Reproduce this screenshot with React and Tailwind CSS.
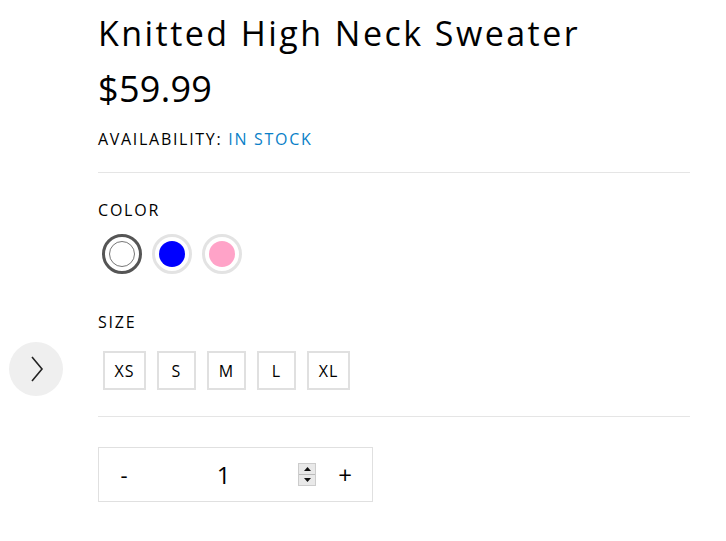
const colors = [
  { name: "white", fill: "bg-white", active: true },
  { name: "blue", fill: "bg-[#0000ff]" },
  { name: "pink", fill: "bg-[#ffa3c8]" },
];

const sizes = ["XS", "S", "M", "L", "XL"];

export default function App() {
  return (
    <div className="relative w-[726px] h-[541px] bg-white text-black font-['Open_Sans',sans-serif] overflow-hidden">
      <button className="absolute left-[9px] top-[342px] w-[54px] h-[54px] rounded-full bg-[#efefef] flex items-center justify-center">
        <svg width="14" height="28" viewBox="0 0 14 28" className="ml-[2px]">
          <path d="M2 2 L12 14 L2 26" fill="none" stroke="#222" strokeWidth="1.6" />
        </svg>
      </button>

      <div className="ml-[98px] w-[592px] pt-[11px]">
        <h1 className="text-[34px] leading-[44px] tracking-[2.45px]">Knitted High Neck Sweater</h1>
        <div className="mt-[12px] text-[36px] leading-[44px] tracking-[0.3px]">$59.99</div>
        <div className="mt-[16px] text-[16px] leading-[24px] tracking-[1.7px]">
          AVAILABILITY: <span className="text-[#0a7fc8]">IN STOCK</span>
        </div>

        <div className="mt-[21px] border-t border-[#e5e5e5]" />

        <div className="mt-[26px] text-[16px] leading-[22px] tracking-[1.8px]">COLOR</div>
        <div className="mt-[13px] flex gap-[10px] pl-[4px]">
          {colors.map((c) => (
            <div
              key={c.name}
              className={`w-[40px] h-[40px] rounded-full p-[4px] border-[3px] ${
                c.active ? "border-[#555]" : "border-[#e3e3e3]"
              }`}
            >
              <div className={`w-full h-full rounded-full ${c.fill} ${c.active ? "border border-[#777]" : ""}`} />
            </div>
          ))}
        </div>

        <div className="mt-[37px] text-[16px] leading-[22px] tracking-[1.8px]">SIZE</div>
        <div className="mt-[18px] flex gap-[11px] pl-[5px]">
          {sizes.map((s) => (
            <div
              key={s}
              className={`h-[39px] ${s.length > 1 ? "w-[43px]" : "w-[39px]"} border-2 border-[#e0e0e0] flex items-center justify-center text-[16px] font-medium tracking-[1px]`}
            >
              {s}
            </div>
          ))}
        </div>

        <div className="mt-[26px] border-t border-[#e5e5e5]" />

        <div className="mt-[30px] w-[275px] h-[55px] border border-[#e0e0e0] flex items-center">
          <span className="w-[50px] text-center text-[22px]">-</span>
          <span className="flex-1 text-center text-[24px]">1</span>
          <div className="w-[18px] h-[23px] border border-[#ccc] bg-[#e9e9e9] flex flex-col mr-[20px]">
            <div className="flex-1 flex items-center justify-center border-b border-[#bbb]">
              <svg width="7" height="4" viewBox="0 0 7 4"><path d="M0 4 L3.5 0 L7 4 Z" fill="#111" /></svg>
            </div>
            <div className="flex-1 flex items-center justify-center">
              <svg width="7" height="4" viewBox="0 0 7 4"><path d="M0 0 L3.5 4 L7 0 Z" fill="#111" /></svg>
            </div>
          </div>
          <span className="w-[18px] text-center text-[24px] mr-[18px]">+</span>
        </div>
      </div>
    </div>
  );
}
